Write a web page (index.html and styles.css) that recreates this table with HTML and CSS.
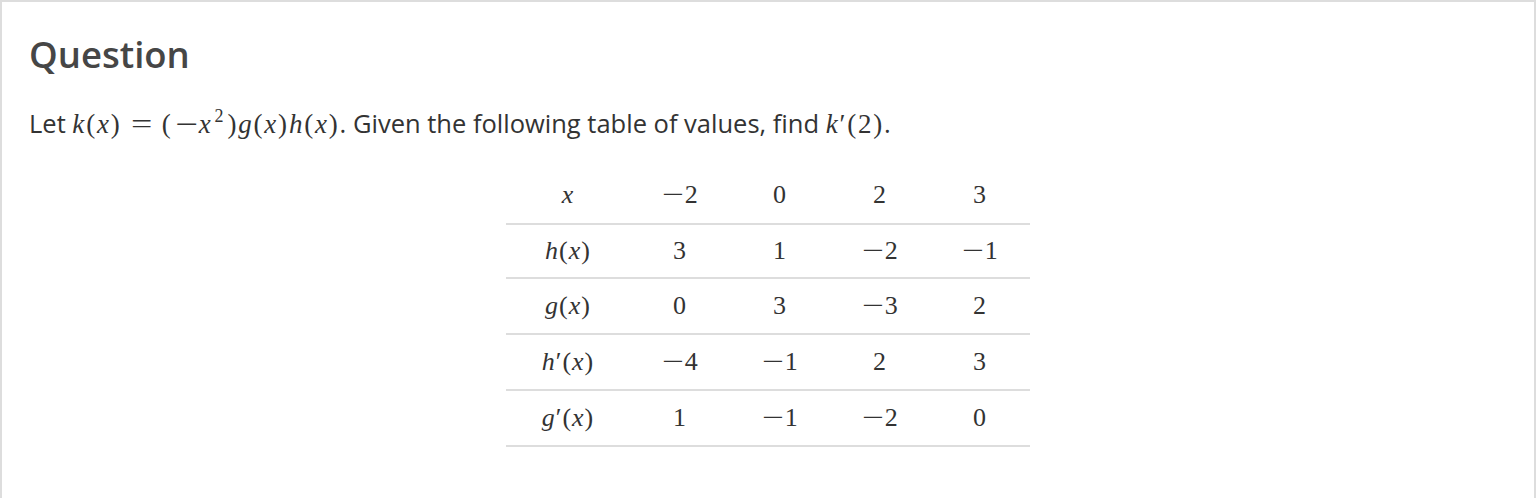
FILE: index.html
```html
<!DOCTYPE html>
<html lang="en">
<head>
<meta charset="utf-8">
<title>Question</title>
<link rel="stylesheet" href="styles.css">
</head>
<body>
<div class="card">
  <h2 class="title">Question</h2>
  <p class="prompt">Let <span class="m"><i>k</i>(<i>x</i>)<span class="op"><span class="eq">=</span></span>(<span class="mn">−</span><i>x</i><sup>2</sup>)<i>g</i>(<i>x</i>)<i>h</i>(<i>x</i>)</span>. Given the following table of values, find <span class="m"><i>k</i>′(2)</span>.</p>
  <table class="values m">
    <tr><td><i>x</i></td><td><span class="mn">−</span>2</td><td>0</td><td>2</td><td>3</td></tr>
    <tr class="r2"><td><i>h</i>(<i>x</i>)</td><td>3</td><td>1</td><td><span class="mn">−</span>2</td><td><span class="mn">−</span>1</td></tr>
    <tr><td><i>g</i>(<i>x</i>)</td><td>0</td><td>3</td><td><span class="mn">−</span>3</td><td>2</td></tr>
    <tr><td><i>h</i>′(<i>x</i>)</td><td><span class="mn">−</span>4</td><td><span class="mn">−</span>1</td><td>2</td><td>3</td></tr>
    <tr><td><i>g</i>′(<i>x</i>)</td><td>1</td><td><span class="mn">−</span>1</td><td><span class="mn">−</span>2</td><td>0</td></tr>
  </table>
</div>
</body>
</html>
```
FILE: styles.css
```css
html, body {
  margin: 0;
  padding: 0;
  background: #fff;
  height: 100%;
}
body {
  font-family: "Open Sans", "Liberation Sans", sans-serif;
  color: #333;
}
.card {
  box-sizing: border-box;
  width: 1536px;
  min-height: 100%;
  border: 2px solid #dddddd;
  border-bottom: none;
  padding: 0 27px;
}
.title {
  margin: 28px 0 0;
  font-size: 36.5px;
  font-weight: 550;
  line-height: 48px;
  color: #464646;
}
.prompt {
  margin: 27px 0 0;
  font-size: 25.5px;
  line-height: 36px;
}
.m {
  font-family: "Liberation Serif", "Times New Roman", serif;
  font-size: 26px;
  letter-spacing: 1px;
}
.prompt .m {
  font-size: 27px;
  letter-spacing: 1.8px;
}
.m i {
  font-style: italic;
}
.m sup {
  font-size: 18px;
  line-height: 0;
  position: relative;
  top: -1px;
  padding: 0 2px 0 2px;
}
.op {
  display: inline-block;
  padding: 0 13px 0 12px;
  letter-spacing: 0;
}
.eq {
  display: inline-block;
  transform: scaleX(1.4);
}
.prompt .mn {
  margin: 0 5px 0 6px;
}
.mn {
  display: inline-block;
  transform: scaleX(1.5);
  margin: 0 4px 0 5px;
  letter-spacing: 0;
}
.values {
  margin: 25px auto 0;
  border-collapse: collapse;
  color: #333;
}
.values td {
  text-align: center;
  height: 54px;
  padding: 0;
  width: 100px;
  border-bottom: 2px solid #dddddd;
}
.values tr:first-child td {
  height: 56px;
}
.values tr.r2 td {
  height: 52px;
}
.values td:first-child {
  width: 124px;
}
```
